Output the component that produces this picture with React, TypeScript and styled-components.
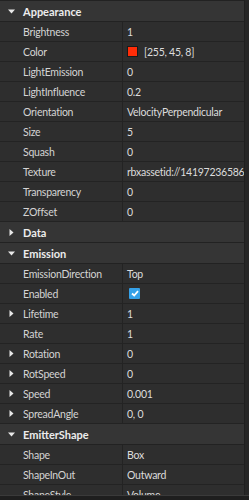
import styled, { createGlobalStyle } from "styled-components";

const GlobalStyle = createGlobalStyle`
  html, body {
    margin: 0;
    padding: 0;
    background: #2e2e2e;
  }
  body {
    font-family: Lato, "Noto Sans", sans-serif;
  }
`;

type Prop = {
  name: string;
  value?: string;
  expandable?: boolean;
  color?: string;
  checked?: boolean;
};

type Section = {
  title: string;
  open: boolean;
  props: Prop[];
};

const sections: Section[] = [
  {
    title: "Appearance",
    open: true,
    props: [
      { name: "Brightness", value: "1" },
      { name: "Color", value: "[255, 45, 8]", color: "#ff2d08" },
      { name: "LightEmission", value: "0" },
      { name: "LightInfluence", value: "0.2" },
      { name: "Orientation", value: "VelocityPerpendicular" },
      { name: "Size", value: "5" },
      { name: "Squash", value: "0" },
      { name: "Texture", value: "rbxassetid://14197236586" },
      { name: "Transparency", value: "0" },
      { name: "ZOffset", value: "0" },
    ],
  },
  { title: "Data", open: false, props: [] },
  {
    title: "Emission",
    open: true,
    props: [
      { name: "EmissionDirection", value: "Top" },
      { name: "Enabled", checked: true },
      { name: "Lifetime", value: "1", expandable: true },
      { name: "Rate", value: "1" },
      { name: "Rotation", value: "0", expandable: true },
      { name: "RotSpeed", value: "0", expandable: true },
      { name: "Speed", value: "0.001", expandable: true },
      { name: "SpreadAngle", value: "0, 0", expandable: true },
    ],
  },
  {
    title: "EmitterShape",
    open: true,
    props: [
      { name: "Shape", value: "Box" },
      { name: "ShapeInOut", value: "Outward" },
      { name: "ShapeStyle", value: "Volume" },
    ],
  },
];

const Arrow = ({ open }: { open: boolean }) => (
  <svg width="7" height="7" viewBox="0 0 7 7">
    {open ? (
      <polygon points="0,1.5 7,1.5 3.5,5.5" fill="#e8e8e8" />
    ) : (
      <polygon points="1.5,0 5.5,3.5 1.5,7" fill="#e8e8e8" />
    )}
  </svg>
);

const Check = () => (
  <svg width="8" height="7" viewBox="0 0 8 7">
    <polyline
      points="1,3.5 3.2,5.5 7,1.2"
      fill="none"
      stroke="#ffffff"
      strokeWidth="1.8"
    />
  </svg>
);

export default function App() {
  return (
    <>
      <GlobalStyle />
      <Frame>
        <Panel>
          {sections.map((s) => (
            <div key={s.title}>
              <Header>
                <Lead>
                  <Arrow open={s.open} />
                </Lead>
                <HeaderText>{s.title}</HeaderText>
              </Header>
              {s.open &&
                s.props.map((p) => (
                  <Row key={p.name}>
                    <NameCell>
                      <Lead>{p.expandable && <Arrow open={false} />}</Lead>
                      <Name>{p.name}</Name>
                    </NameCell>
                    <ValueCell>
                      {p.color && <Swatch color={p.color} />}
                      {p.checked && (
                        <CheckBox>
                          <Check />
                        </CheckBox>
                      )}
                      {p.value && <Value>{p.value}</Value>}
                    </ValueCell>
                  </Row>
                ))}
            </div>
          ))}
        </Panel>
        <ScrollTrack />
      </Frame>
      <HScroll />
    </>
  );
}

const Frame = styled.div`
  display: flex;
  width: 249px;
  height: 495px;
  overflow: hidden;
  background: #2e2e2e;
`;

const Panel = styled.div`
  flex: 1;
  display: flex;
  flex-direction: column;
  border-top: 1px solid #222222;
`;

const ScrollTrack = styled.div`
  width: 4px;
  background: #262626;
  border-left: 1px solid #1f1f1f;
`;

const HScroll = styled.div`
  height: 5px;
  width: 249px;
  background: #1e1e1e;
  border-top: 1px solid #3a3a3a;
  box-sizing: border-box;
`;

const Header = styled.div`
  display: flex;
  align-items: center;
  height: 20px;
  background: #353535;
  border-bottom: 1px solid #222222;
`;

const Lead = styled.div`
  width: 23px;
  display: flex;
  align-items: center;
  justify-content: flex-start;
  padding-left: 8px;
  box-sizing: border-box;
  flex-shrink: 0;
`;

const HeaderText = styled.span`
  font-size: 11px;
  font-weight: 700;
  color: #ececec;
`;

const Row = styled.div`
  display: grid;
  grid-template-columns: 123px 1fr;
  height: 19px;
  border-bottom: 1px solid #232323;
  background: #2e2e2e;
`;

const NameCell = styled.div`
  display: flex;
  align-items: center;
  border-right: 1px solid #232323;
  overflow: hidden;
`;

const Name = styled.span`
  font-size: 10.5px;
  letter-spacing: -0.25px;
  color: #d4d4d4;
  white-space: nowrap;
`;

const ValueCell = styled.div`
  display: flex;
  align-items: center;
  padding-left: 4px;
  gap: 6px;
  overflow: hidden;
`;

const Value = styled.span`
  font-size: 10.5px;
  letter-spacing: -0.25px;
  color: #dcdcdc;
  white-space: nowrap;
`;

const Swatch = styled.span<{ color: string }>`
  width: 9px;
  height: 9px;
  background: ${(p) => p.color};
  border: 1px solid #1a1a1a;
`;

const CheckBox = styled.span`
  width: 11px;
  height: 11px;
  margin-left: 2px;
  background: #35a1e8;
  border-radius: 1px;
  display: flex;
  align-items: center;
  justify-content: center;
`;
